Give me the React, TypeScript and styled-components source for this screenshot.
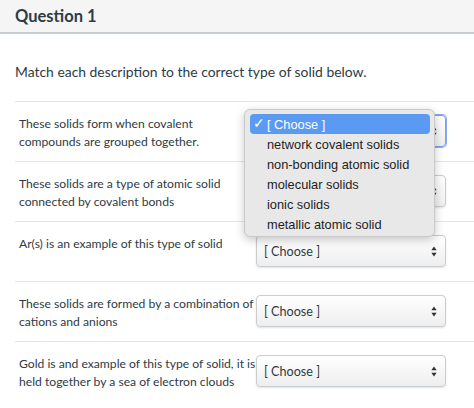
import React from "react";
import styled, { createGlobalStyle } from "styled-components";

const Global = createGlobalStyle`
  html, body { margin: 0; padding: 0; background: #fff; }
  body { font-family: Lato, "Open Sans", sans-serif; color: #2d3b45; }
  * { box-sizing: border-box; }
`;

const Page = styled.div`
  width: 474px;
  height: 408px;
  overflow: hidden;
`;

const Header = styled.div`
  height: 34px;
  background: #f5f5f5;
  border-bottom: 2px solid #c7cdd1;
  padding-left: 15px;
  display: flex;
  align-items: center;
  font-size: 16.5px;
  font-weight: 700;
  color: #2d3b45;
`;

const Prompt = styled.p`
  margin: 28px 0 0;
  padding: 0 15px;
  font-size: 13.9px;
  line-height: 20px;
  color: #2d3b45;
`;

const List = styled.div`
  margin: 19px 0 0 15px;
`;

const Row = styled.div`
  height: 60px;
  border-top: 1px solid #e4e7ea;
  display: flex;
  align-items: flex-start;
  padding: 13px 0 0 4px;
`;

const Desc = styled.div`
  width: 237px;
  font-size: 12.15px;
  line-height: 18px;
  color: #2d3b45;
  flex-shrink: 0;
  white-space: nowrap;
`;

const SelectWrap = styled.div`
  position: relative;
`;

const SelectBox = styled.div<{ $focused?: boolean }>`
  width: 190px;
  height: 32px;
  border-radius: 4px;
  border: 1px solid ${(p) => (p.$focused ? "#7c9ff0" : "#c7cdd1")};
  box-shadow: ${(p) =>
    p.$focused ? "0 0 0 1px #8aa8f0" : "0 1px 2px rgba(0,0,0,0.12)"};
  background: linear-gradient(#ffffff, #eeeeee);
  display: flex;
  align-items: center;
  justify-content: space-between;
  padding: 0 8px 0 7px;
  font-size: 12.6px;
  color: #2d3b45;
`;

const Arrows = () => (
  <svg width="6" height="11" viewBox="0 0 6 11">
    <path d="M3 0.5 L5.6 4.2 H0.4 Z" fill="#333" />
    <path d="M3 10.5 L5.6 6.8 H0.4 Z" fill="#333" />
  </svg>
);

const Menu = styled.div`
  position: absolute;
  left: -12px;
  top: -6px;
  width: 191px;
  height: 128px;
  background: #e8e8e8;
  border: 1px solid #c9c9c9;
  border-radius: 6px;
  box-shadow: 0 3px 10px rgba(0, 0, 0, 0.22);
  padding: 4px 4px 0 5px;
  z-index: 10;
  font-family: "Liberation Sans", Arial, sans-serif;
  font-size: 12.8px;
`;

const MenuItem = styled.div<{ $active?: boolean }>`
  height: 20px;
  border-radius: 4px;
  display: flex;
  align-items: center;
  padding-left: 17px;
  position: relative;
  white-space: nowrap;
  color: ${(p) => (p.$active ? "#fff" : "#1e1e1e")};
  background: ${(p) => (p.$active ? "#5a9af3" : "transparent")};
`;

const Check = styled.span`
  position: absolute;
  left: 3px;
  top: 1px;
  font-family: "DejaVu Sans", sans-serif;
  font-size: 14px;
  font-weight: 700;
`;

const rows = [
  ["These solids form when covalent", "compounds are grouped together."],
  ["These solids are a type of atomic solid", "connected by covalent bonds"],
  ["Ar(s) is an example of this type of solid"],
  ["These solids are formed by a combination of", "cations and anions"],
  ["Gold is and example of this type of solid, it is", "held together by a sea of electron clouds"],
];

const options = [
  "[ Choose ]",
  "network covalent solids",
  "non-bonding atomic solid",
  "molecular solids",
  "ionic solids",
  "metallic atomic solid",
];

export default function App() {
  return (
    <Page>
      <Global />
      <Header>Question 1</Header>
      <Prompt>Match each description to the correct type of solid below.</Prompt>
      <List>
        {rows.map((lines, i) => (
          <Row key={i}>
            <Desc>
              {lines.map((l, j) => (
                <div key={j}>{l}</div>
              ))}
            </Desc>
            <SelectWrap>
              <SelectBox $focused={i === 0}>
                <span>[ Choose ]</span>
                <Arrows />
              </SelectBox>
              {i === 0 && (
                <Menu>
                  {options.map((o, k) => (
                    <MenuItem key={k} $active={k === 0}>
                      {k === 0 && <Check>✓</Check>}
                      {o}
                    </MenuItem>
                  ))}
                </Menu>
              )}
            </SelectWrap>
          </Row>
        ))}
      </List>
    </Page>
  );
}
